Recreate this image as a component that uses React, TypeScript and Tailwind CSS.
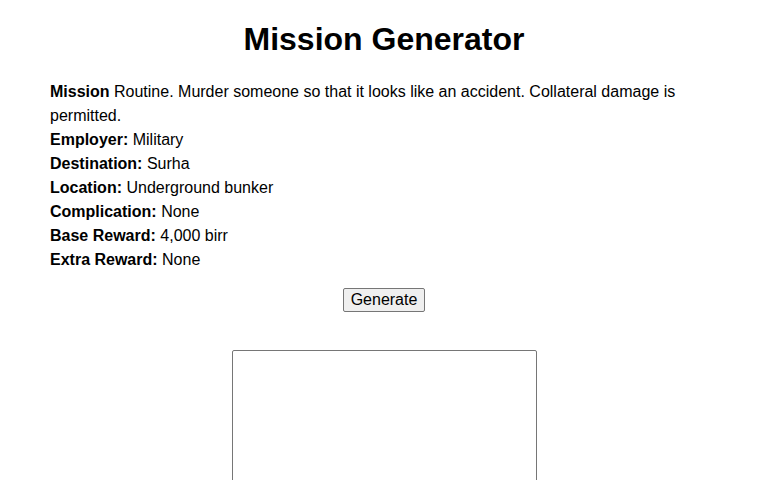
import { useState } from "react"

const fields: [string, string][] = [
  ["Employer:", "Military"],
  ["Destination:", "Surha"],
  ["Location:", "Underground bunker"],
  ["Complication:", "None"],
  ["Base Reward:", "4,000 birr"],
  ["Extra Reward:", "None"],
]

export default function App() {
  const [notes, setNotes] = useState("")

  return (
    <div className="h-screen overflow-hidden bg-white text-black font-['Liberation_Sans',Arial,sans-serif] px-[50px]">
      <h1 className="text-[32px] font-bold leading-[normal] text-center pt-[21px] mb-[22px]">Mission Generator</h1>

      <div className="text-[16px] leading-6">
        <div>
          <b>Mission</b> Routine. Murder someone so that it looks like an accident. Collateral damage is permitted.
        </div>
        {fields.map(([label, value]) => (
          <div key={label}>
            <b>{label}</b> {value}
          </div>
        ))}
      </div>

      <div className="flex justify-center mt-4">
        <button className="h-6 w-[82px] bg-[#efefef] border border-[#767676] rounded-[2px] text-[16px] leading-none text-black">
          Generate
        </button>
      </div>

      <div className="flex justify-center mt-[38px]">
        <textarea
          value={notes}
          onChange={(e) => setNotes(e.target.value)}
          className="w-[305px] h-[200px] shrink-0 border border-[#767676] rounded-[2px] resize-none outline-none"
        />
      </div>
    </div>
  )
}
